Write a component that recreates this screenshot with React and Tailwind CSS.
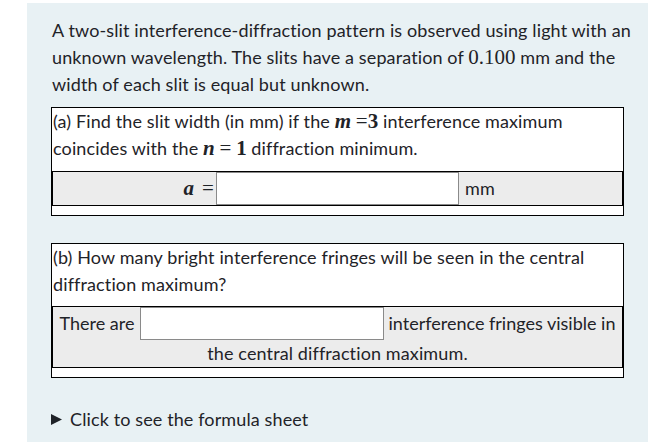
import React from "react";

const mathFont = "font-['Liberation_Serif',serif]";

const Var = ({ children }) => (
  <span className={`${mathFont} text-[21px] font-bold italic tracking-normal`}>{children}</span>
);

const Num = ({ children, bold }) => (
  <span className={`${mathFont} text-[21px] tracking-normal ${bold ? "font-bold" : ""}`}>{children}</span>
);

const Eq = () => <span className={`${mathFont} text-[21px]`}>=</span>;

const AnswerInput = ({ className = "" }) => (
  <input
    type="text"
    className={`block h-[33px] border border-[#8a8a8a] bg-white px-1 outline-none ${className}`}
  />
);

const App = () => {
  return (
    <div className="min-h-screen bg-white font-['Lato',sans-serif] text-[18px] leading-[27px] tracking-[0.12px] text-[#1f2328]">
      <div className="ml-[27px] mt-[3px] min-h-[460px] w-[621px] bg-[#e8f1f4] px-[24px] pt-[14px]">
        <p className="mr-[-16px] pl-[1px]">
          A two-slit interference-diffraction pattern is observed using light with an unknown wavelength. The slits have a separation of <Num>0.100</Num> mm and the width of each slit is equal but unknown.
        </p>

        {/* part a */}
        <div className="mt-[9px] border border-black bg-white">
          <p className="pl-[1px]">
            (a) Find the slit width (in mm) if the <Var>m</Var>&nbsp;<Eq /><Num bold>3</Num> interference maximum coincides with the <Var>n</Var> <Eq /> <Num bold>1</Num> diffraction minimum.
          </p>
          <div className="mt-[9px] mb-[9px] grid grid-cols-[163px_243px_1fr] border border-black bg-[#ececec]">
            <div className="flex items-center justify-end pr-[2px]">
              <Var>a</Var>
              <span className="ml-[8px]"><Eq /></span>
            </div>
            <AnswerInput className="w-[243px]" />
            <div className="flex items-center pl-[6px]">mm</div>
          </div>
        </div>

        {/* part b */}
        <div className="mt-[27px] border border-black bg-white">
          <p className="pl-[1px]">
            (b) How many bright interference fringes will be seen in the central diffraction maximum?
          </p>
          <div className="mt-[8px] mb-[9px] border border-black bg-[#ececec] text-center">
            <div className="flex items-center justify-center gap-[5px] tracking-normal">
              <span>There are</span>
              <AnswerInput className="w-[244px]" />
              <span>interference fringes visible in</span>
            </div>
            <div>the central diffraction maximum.</div>
          </div>
        </div>

        <div className="mt-[28px] flex items-center gap-[8px]">
          <svg width="11" height="11" viewBox="0 0 11 11" className="shrink-0">
            <path d="M0 0 L11 5.5 L0 11 Z" fill="#1f2328" />
          </svg>
          <span>Click to see the formula sheet</span>
        </div>
      </div>
    </div>
  );
};

export default App;
